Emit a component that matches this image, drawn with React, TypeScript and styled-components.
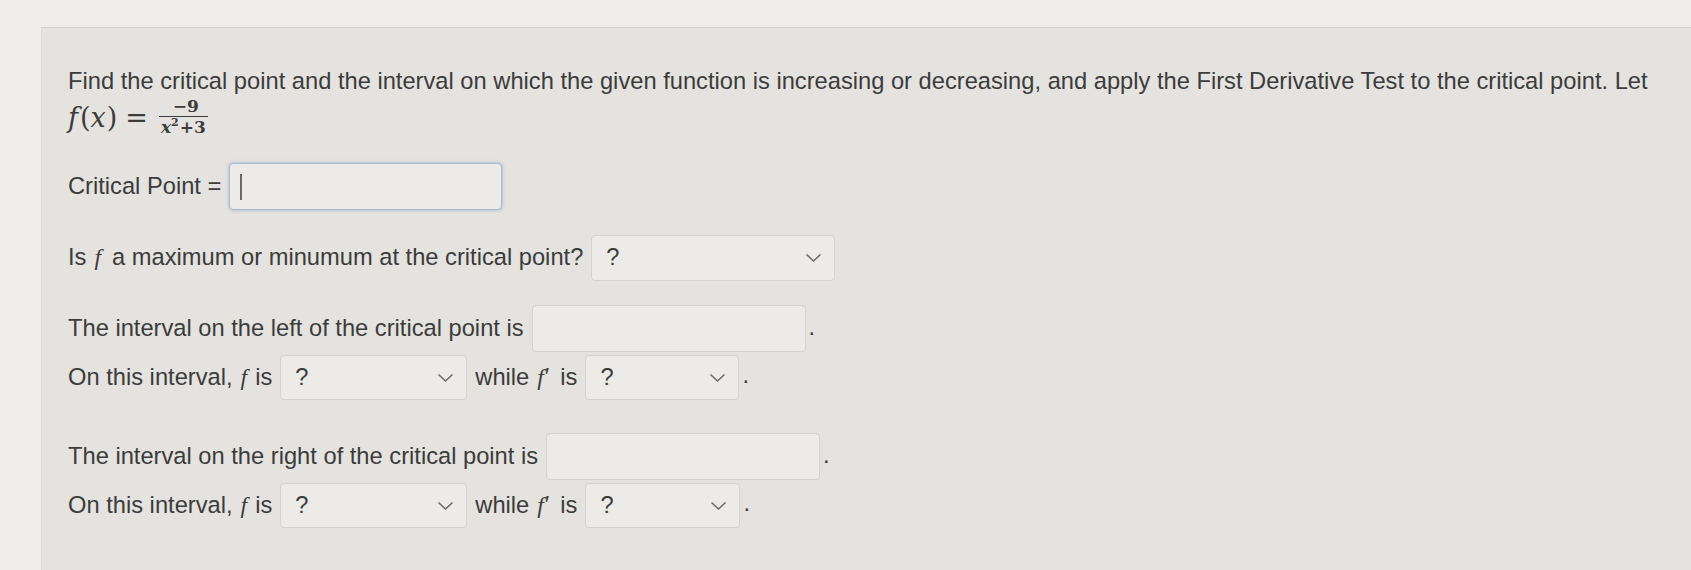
import React from "react";
import styled, { createGlobalStyle } from "styled-components";

const GlobalStyle = createGlobalStyle`
  html, body {
    margin: 0;
    padding: 0;
    background: #eeedea;
  }
  body {
    font-family: "Liberation Sans", Arial, sans-serif;
    color: #3c3c3c;
  }
`;

const Page = styled.div`
  width: 1691px;
  height: 570px;
  padding: 27px 0 0 41px;
  box-sizing: border-box;
  overflow: hidden;
`;

const Panel = styled.section`
  height: 100%;
  background: #e4e3df;
  border-top: 1px solid #d6d5d1;
  border-left: 1px solid #dcdbd7;
  padding: 37px 0 0 26px;
  box-sizing: border-box;
  font-size: 23.7px;
`;

const Prompt = styled.p`
  margin: 0;
  line-height: 33px;
  white-space: nowrap;
`;

const MathLine = styled.span`
  display: inline-flex;
  align-items: center;
  height: 38px;
  font-family: "DejaVu Serif", "Liberation Serif", serif;
  font-size: 27px;
`;

const Ital = styled.i<{ $pad?: number }>`
  font-family: "Liberation Serif", "Times New Roman", serif;
  font-style: italic;
  padding-right: ${(p) => p.$pad ?? 1}px;
`;

const MathIt = styled.i<{ $pad?: number }>`
  font-family: "DejaVu Serif", "Liberation Serif", serif;
  font-style: italic;
  padding-right: ${(p) => p.$pad ?? 0}px;
`;

const Equals = styled.span`
  padding: 0 11px 0 8px;
`;

const Frac = styled.span`
  display: inline-flex;
  flex-direction: column;
  align-items: center;
  font-size: 17px;
  line-height: 16px;
  font-weight: bold;
  margin-top: -2px;
`;

const Num = styled.span`
  align-self: stretch;
  text-align: center;
  padding: 0 0 2px 5px;
  border-bottom: 1px solid #3c3c3c;
`;

const Den = styled.span`
  padding: 2px 2px 0;
`;

const Sup = styled.sup`
  font-size: 11px;
  line-height: 0;
  padding-right: 1px;
`;

const Row = styled.div<{ $top?: number }>`
  display: flex;
  align-items: center;
  gap: 8px;
  margin-top: ${(p) => p.$top ?? 0}px;
  line-height: 1;
`;

const Group = styled.div<{ $top: number }>`
  display: flex;
  flex-direction: column;
  gap: 4px;
  margin-top: ${(p) => p.$top}px;
`;

const Box = styled.div<{ $w: number; $h?: number; $focus?: boolean }>`
  width: ${(p) => p.$w}px;
  height: ${(p) => p.$h ?? 46}px;
  box-sizing: border-box;
  background: #ecebe7;
  border: 1px solid ${(p) => (p.$focus ? "#a8b8cd" : "#d4d3cf")};
  box-shadow: ${(p) => (p.$focus ? "0 0 3px 1px rgba(140,165,200,0.45)" : "none")};
  border-radius: 4px;
  display: flex;
  align-items: center;
  justify-content: space-between;
  padding: 0 12px 0 14px;
`;

const Caret = styled.span`
  width: 2px;
  height: 26px;
  background: #6d6a66;
  margin-left: -4px;
`;

const Chevron = styled.svg`
  width: 17px;
  height: 10px;
  flex: none;
`;

const Prime = styled.span`
  padding-right: 3px;
`;

const Dot = styled.span`
  margin-left: -5px;
  align-self: flex-end;
  padding-bottom: 12px;
`;

const Select = ({ w, h }: { w: number; h?: number }) => (
  <Box $w={w} $h={h}>
    <span>?</span>
    <Chevron viewBox="0 0 17 10">
      <path d="M1.5 1.5 L8.5 8 L15.5 1.5" fill="none" stroke="#6f6d6a" strokeWidth="1.6" />
    </Chevron>
  </Box>
);

const IntervalRow = ({ side, w }: { side: string; w: number }) => (
  <>
    <Row>
      The interval on the {side} of the critical point is
      <Box $w={274} $h={47} />
      <Dot>.</Dot>
    </Row>
    <Row $top={-1}>
      On this interval, <Ital $pad={0}>f</Ital> is
      <Select w={187} h={45} />
      while{" "}
      <Prime>
        <Ital $pad={1}>f</Ital>′
      </Prime>{" "}
      is
      <Select w={w} h={45} />
      <Dot>.</Dot>
    </Row>
  </>
);

export default function App() {
  return (
    <Page>
      <GlobalStyle />
      <Panel>
        <Prompt>
          Find the critical point and the interval on which the given function is increasing or decreasing, and
          apply the First Derivative Test to the critical point. Let
          <br />
          <MathLine>
            <span>
              <MathIt $pad={2}>f</MathIt>(<MathIt $pad={1}>x</MathIt>)
            </span>
            <Equals>=</Equals>
            <Frac>
              <Num>−9</Num>
              <Den>
                <MathIt>x</MathIt>
                <Sup>2</Sup>+3
              </Den>
            </Frac>
          </MathLine>
        </Prompt>

        <Row $top={27}>
          Critical Point =
          <Box $w={273} $h={47} $focus>
            <Caret />
          </Box>
        </Row>

        <Row $top={25}>
          Is <Ital $pad={3}>f</Ital> a maximum or minumum at the critical point?
          <Select w={244} />
        </Row>

        <Group $top={24}>
          <IntervalRow side="left" w={154} />
        </Group>

        <Group $top={33}>
          <IntervalRow side="right" w={155} />
        </Group>
      </Panel>
    </Page>
  );
}
